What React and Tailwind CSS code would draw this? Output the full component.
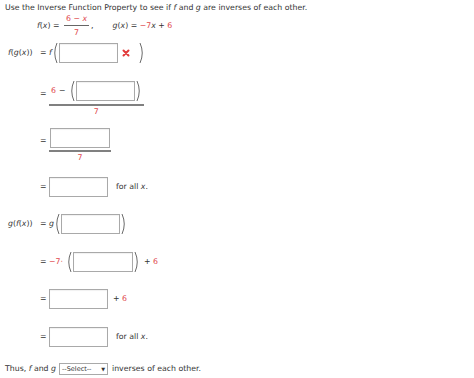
import React from 'react';

const red = 'text-[#e0474c]';

function Paren({ right = false, h = 22 }) {
  return (
    <svg width="7" height={h} viewBox={`0 0 7 ${h}`} className="shrink-0">
      <path
        d={right ? `M2 1 Q6.5 ${h / 2} 2 ${h - 1}` : `M5 1 Q0.5 ${h / 2} 5 ${h - 1}`}
        fill="none"
        stroke="#6b6b6b"
        strokeWidth="1"
      />
    </svg>
  );
}

function Box({ w = 'w-[59px]' }) {
  return <div className={`${w} h-[20px] shrink-0 border border-[#a9a9a9] bg-white shadow-[inset_0_1px_1px_rgba(0,0,0,0.06)]`} />;
}

function Eq() {
  return <span className="w-[9px] shrink-0">=</span>;
}

function Label({ children }) {
  return <span className="w-[40px] shrink-0 pl-[8px]">{children}</span>;
}

export default function App() {
  return (
    <div className="w-[474px] h-[378px] bg-white text-[#333] text-[7.8px] leading-none overflow-hidden" style={{ fontFamily: '"DejaVu Sans", Verdana, sans-serif' }}>
      {/* prompt */}
      <div className="pl-[5px] pt-[4px] h-[12px]">
        Use the Inverse Function Property to see if <i>f</i> and <i>g</i> are inverses of each other.
      </div>

      {/* definitions */}
      <div className="flex items-center pl-[37px] mt-[3px] h-[22px]">
        <span><i>f</i>(<i>x</i>) =&nbsp;</span>
        <div className="flex flex-col items-center mx-[2px]">
          <span className={`${red} px-[2px] pb-[2px]`}>6 − <i className="text-[#e0474c]">x</i></span>
          <div className="w-full border-t border-[#666]" />
          <span className={`${red} pt-[3px]`}>7</span>
        </div>
        <span>,</span>
        <span className="ml-[19px]"><i>g</i>(<i>x</i>) = <span className={red}>−7</span><i>x</i> + <span className={red}>6</span></span>
      </div>

      {/* f(g(x)) */}
      <div className="flex items-center mt-[5px] h-[22px]">
        <Label><i>f</i>(<i>g</i>(<i>x</i>))</Label>
        <Eq />
        <i>f</i>
        <Paren />
        <Box />
        <svg width="8" height="8" viewBox="0 0 8 8" className="ml-[4px]">
          <path d="M1.5 1.5 L6.5 6.5 M6.5 1.5 L1.5 6.5" stroke="#e23a3a" strokeWidth="2" strokeLinecap="round" />
        </svg>
        <span className="ml-[8px]"><Paren right /></span>
      </div>

      {/* = (6 - ( )) / 7 */}
      <div className="flex items-center mt-[17px] h-[34px]">
        <span className="w-[40px] shrink-0" />
        <span className="w-[9px] shrink-0 pb-[8px]">=</span>
        <div className="flex flex-col items-center">
          <div className="flex items-center px-[2px] pb-[2px]">
            <span className={red}>6</span>
            <span className="ml-[3px]">−</span>
            <span className="ml-[3px]"><Paren /></span>
            <Box />
            <Paren right />
          </div>
          <div className="w-full border-t-2 border-[#808080]" />
          <span className={`${red} pt-[2px]`}>7</span>
        </div>
      </div>

      {/* = ( ) / 7 */}
      <div className="flex items-center mt-[13px] h-[34px]">
        <span className="w-[40px] shrink-0" />
        <span className="w-[9px] shrink-0 pb-[8px]">=</span>
        <div className="flex flex-col items-center">
          <div className="px-[1px] pb-[2px]"><Box w="w-[60px]" /></div>
          <div className="w-full border-t-2 border-[#808080]" />
          <span className={`${red} pt-[2px]`}>7</span>
        </div>
      </div>

      {/* = [] for all x */}
      <div className="flex items-center mt-[14px] h-[21px]">
        <span className="w-[40px] shrink-0" />
        <Eq />
        <Box />
        <span className="ml-[8px]">for all <i>x</i>.</span>
      </div>

      {/* g(f(x)) */}
      <div className="flex items-center mt-[16px] h-[21px]">
        <Label><i>g</i>(<i>f</i>(<i>x</i>))</Label>
        <Eq />
        <i>g</i>
        <Paren />
        <Box />
        <Paren right />
      </div>

      {/* = -7( ) + 6 */}
      <div className="flex items-center mt-[17px] h-[21px]">
        <span className="w-[40px] shrink-0" />
        <Eq />
        <span className={red}>−7·</span>
        <span className="ml-[3px]"><Paren /></span>
        <Box w="w-[60px]" />
        <Paren right />
        <span className="ml-[4px]">+ <span className={red}>6</span></span>
      </div>

      {/* = [] + 6 */}
      <div className="flex items-center mt-[16px] h-[21px]">
        <span className="w-[40px] shrink-0" />
        <Eq />
        <Box />
        <span className="ml-[5px]">+ <span className={red}>6</span></span>
      </div>

      {/* = [] for all x */}
      <div className="flex items-center mt-[17px] h-[21px]">
        <span className="w-[40px] shrink-0" />
        <Eq />
        <Box />
        <span className="ml-[8px]">for all <i>x</i>.</span>
      </div>

      {/* conclusion */}
      <div className="flex items-center pl-[5px] mt-[15px] h-[14px]">
        <span>Thus, <i>f</i> and <i>g</i></span>
        <div className="ml-[3px] w-[49px] h-[12px] flex items-center justify-between px-[2px] border border-[#a9a9a9] bg-white text-[6.5px]">
          <span>--Select--</span>
          <span className="text-[5px]">▼</span>
        </div>
        <span className="ml-[4px]">inverses of each other.</span>
      </div>
    </div>
  );
}
